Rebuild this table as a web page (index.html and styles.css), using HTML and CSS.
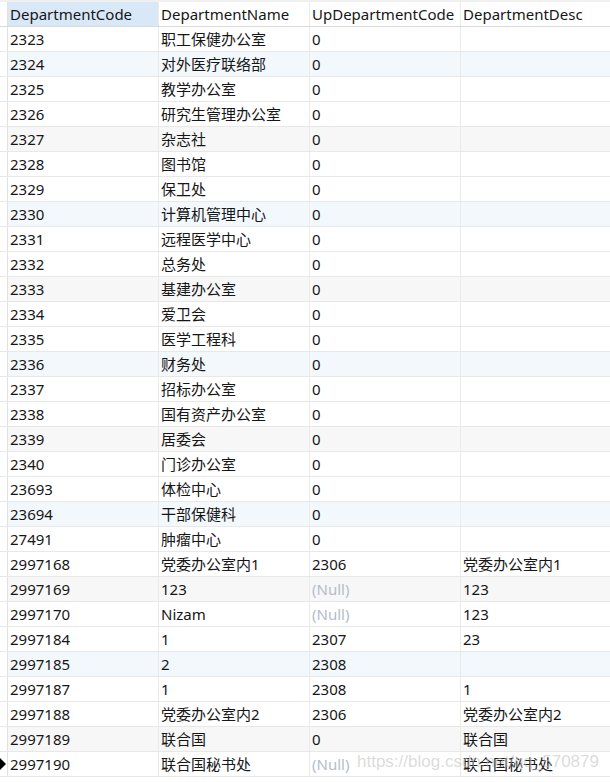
FILE: index.html
```html
<!DOCTYPE html>
<html>
<head>
<meta charset="utf-8">
<link rel="stylesheet" href="styles.css">
</head>
<body>
<div class="grid">
  <div class="topband"></div>
  <div class="row head">
    <div class="gut"></div>
    <div class="c sel">DepartmentCode</div>
    <div class="c">DepartmentName</div>
    <div class="c">UpDepartmentCode</div>
    <div class="c">DepartmentDesc</div>
  </div>
  <div class="row"><div class="gut"></div><div class="c">2323</div><div class="c">职工保健办公室</div><div class="c">0</div><div class="c"></div></div>
  <div class="row blue"><div class="gut"></div><div class="c">2324</div><div class="c">对外医疗联络部</div><div class="c">0</div><div class="c"></div></div>
  <div class="row"><div class="gut"></div><div class="c">2325</div><div class="c">教学办公室</div><div class="c">0</div><div class="c"></div></div>
  <div class="row"><div class="gut"></div><div class="c">2326</div><div class="c">研究生管理办公室</div><div class="c">0</div><div class="c"></div></div>
  <div class="row gray"><div class="gut"></div><div class="c">2327</div><div class="c">杂志社</div><div class="c">0</div><div class="c"></div></div>
  <div class="row"><div class="gut"></div><div class="c">2328</div><div class="c">图书馆</div><div class="c">0</div><div class="c"></div></div>
  <div class="row"><div class="gut"></div><div class="c">2329</div><div class="c">保卫处</div><div class="c">0</div><div class="c"></div></div>
  <div class="row blue"><div class="gut"></div><div class="c">2330</div><div class="c">计算机管理中心</div><div class="c">0</div><div class="c"></div></div>
  <div class="row"><div class="gut"></div><div class="c">2331</div><div class="c">远程医学中心</div><div class="c">0</div><div class="c"></div></div>
  <div class="row"><div class="gut"></div><div class="c">2332</div><div class="c">总务处</div><div class="c">0</div><div class="c"></div></div>
  <div class="row gray"><div class="gut"></div><div class="c">2333</div><div class="c">基建办公室</div><div class="c">0</div><div class="c"></div></div>
  <div class="row"><div class="gut"></div><div class="c">2334</div><div class="c">爱卫会</div><div class="c">0</div><div class="c"></div></div>
  <div class="row"><div class="gut"></div><div class="c">2335</div><div class="c">医学工程科</div><div class="c">0</div><div class="c"></div></div>
  <div class="row blue"><div class="gut"></div><div class="c">2336</div><div class="c">财务处</div><div class="c">0</div><div class="c"></div></div>
  <div class="row"><div class="gut"></div><div class="c">2337</div><div class="c">招标办公室</div><div class="c">0</div><div class="c"></div></div>
  <div class="row"><div class="gut"></div><div class="c">2338</div><div class="c">国有资产办公室</div><div class="c">0</div><div class="c"></div></div>
  <div class="row gray"><div class="gut"></div><div class="c">2339</div><div class="c">居委会</div><div class="c">0</div><div class="c"></div></div>
  <div class="row"><div class="gut"></div><div class="c">2340</div><div class="c">门诊办公室</div><div class="c">0</div><div class="c"></div></div>
  <div class="row"><div class="gut"></div><div class="c">23693</div><div class="c">体检中心</div><div class="c">0</div><div class="c"></div></div>
  <div class="row blue"><div class="gut"></div><div class="c">23694</div><div class="c">干部保健科</div><div class="c">0</div><div class="c"></div></div>
  <div class="row"><div class="gut"></div><div class="c">27491</div><div class="c">肿瘤中心</div><div class="c">0</div><div class="c"></div></div>
  <div class="row"><div class="gut"></div><div class="c">2997168</div><div class="c">党委办公室内1</div><div class="c">2306</div><div class="c">党委办公室内1</div></div>
  <div class="row gray"><div class="gut"></div><div class="c">2997169</div><div class="c">123</div><div class="c null">(Null)</div><div class="c">123</div></div>
  <div class="row"><div class="gut"></div><div class="c">2997170</div><div class="c">Nizam</div><div class="c null">(Null)</div><div class="c">123</div></div>
  <div class="row"><div class="gut"></div><div class="c">2997184</div><div class="c">1</div><div class="c">2307</div><div class="c">23</div></div>
  <div class="row blue"><div class="gut"></div><div class="c">2997185</div><div class="c">2</div><div class="c">2308</div><div class="c"></div></div>
  <div class="row"><div class="gut"></div><div class="c">2997187</div><div class="c">1</div><div class="c">2308</div><div class="c">1</div></div>
  <div class="row"><div class="gut"></div><div class="c">2997188</div><div class="c">党委办公室内2</div><div class="c">2306</div><div class="c">党委办公室内2</div></div>
  <div class="row gray"><div class="gut"></div><div class="c">2997189</div><div class="c">联合国</div><div class="c">0</div><div class="c">联合国</div></div>
  <div class="row current"><div class="gut"><span class="arrow"></span></div><div class="c">2997190</div><div class="c">联合国秘书处</div><div class="c null">(Null)</div><div class="c">联合国秘书处</div></div>
  <div class="watermark">https://blog.csdn.net/qq_570879</div>
</div>
</body>
</html>
```

FILE: styles.css
```css
html, body {
  margin: 0;
  padding: 0;
  background: #ffffff;
}

.grid {
  position: relative;
  width: 610px;
  font-family: "Noto Sans", "Noto Sans CJK SC", sans-serif;
  font-size: 15px;
  color: #161616;
}

.topband {
  height: 2px;
  background: #f0f0f0;
}

.row {
  display: grid;
  grid-template-columns: 8px 151px 151px 151px 1fr;
  height: 25px;
  box-sizing: border-box;
  border-bottom: 1px solid #e8e8e8;
}

.row.head {
  height: 25px;
  border-bottom: 1px solid #dadada;
}

.row.blue .c {
  background: #f3f8fd;
}

.row.gray .c {
  background: #f7f7f7;
}

.gut {
  border-right: 1px solid #e2e2e2;
  position: relative;
  background: #ffffff;
}

.c {
  border-right: 1px solid #ebebeb;
  padding-left: 2px;
  line-height: 24px;
  white-space: nowrap;
  overflow: hidden;
}

.c:last-child {
  border-right: none;
}

.c.sel {
  background: #d9e8f7;
}

.c.null {
  color: #b5bccb;
}

.arrow {
  position: absolute;
  left: 0;
  top: 6px;
  width: 0;
  height: 0;
  border-top: 6px solid transparent;
  border-bottom: 6px solid transparent;
  border-left: 6px solid #000000;
}

.watermark {
  position: absolute;
  left: 357px;
  top: 752px;
  font-family: "Liberation Sans", Arial, sans-serif;
  font-size: 17px;
  color: rgba(190, 190, 190, 0.55);
  white-space: nowrap;
  pointer-events: none;
}
```
